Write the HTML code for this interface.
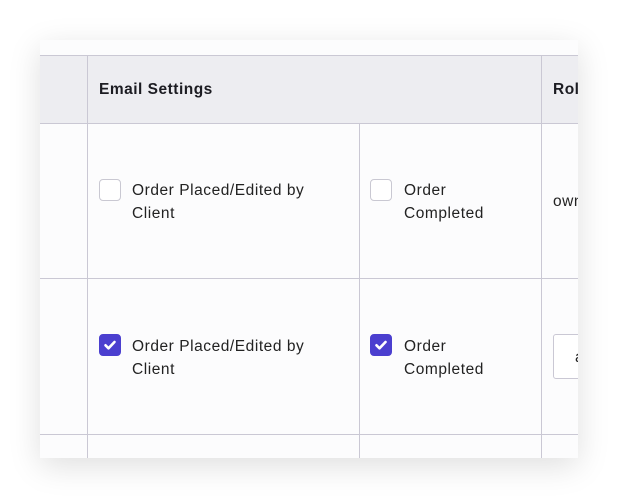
<!DOCTYPE html>
<html><head><meta charset="utf-8"><style>
html,body{margin:0;padding:0;background:#fff;width:618px;height:498px;overflow:hidden;font-family:"Liberation Sans",sans-serif;}
.card{position:absolute;left:40px;top:40px;width:538px;height:418px;background:#fcfcfd;overflow:hidden;box-shadow:0 8px 30px rgba(0,0,0,0.13);}
.abs{position:absolute}
.hl{position:absolute;left:0;width:538px;height:1px;background:#cac8d4}
.vl{position:absolute;width:1px;background:#cac8d4}
.t{position:absolute;font-size:15.5px;line-height:23px;color:#222;letter-spacing:0.55px;white-space:nowrap}
.cb{position:absolute;width:20px;height:20px;border:1px solid #c9c8d2;border-radius:4px;background:#fff}
.cb.on{background:#4b3fcf;border-color:#4b3fcf}
</style></head><body>
<div class="card">
  <div class="abs" style="left:0;top:16px;width:538px;height:67px;background:#ededf1"></div>
  <div class="hl" style="top:15px"></div>
  <div class="hl" style="top:83px"></div>
  <div class="hl" style="top:238px"></div>
  <div class="hl" style="top:394px"></div>
  <div class="vl" style="left:47px;top:16px;height:402px"></div>
  <div class="vl" style="left:319px;top:84px;height:334px"></div>
  <div class="vl" style="left:501px;top:16px;height:402px"></div>
  <div class="t" style="left:59px;top:38px;font-weight:bold;color:#1c1c22;letter-spacing:0.5px">Email Settings</div>
  <div class="t" style="left:513px;top:38px;font-weight:bold;color:#1c1c22;letter-spacing:0.5px">Role</div>

  <div class="cb" style="left:59px;top:139px"></div>
  <div class="t" style="left:92px;top:139px">Order Placed/Edited by<br>Client</div>
  <div class="cb" style="left:330px;top:139px"></div>
  <div class="t" style="left:364px;top:139px">Order<br>Completed</div>
  <div class="t" style="left:513px;top:150px">owner</div>

  <div class="cb on" style="left:59px;top:294px"><svg width="20" height="20" viewBox="0 0 20 20"><path d="M5.5 10.3l3 3 6-6.3" fill="none" stroke="#fff" stroke-width="2.6" stroke-linecap="round" stroke-linejoin="round"/></svg></div>
  <div class="t" style="left:92px;top:295px">Order Placed/Edited by<br>Client</div>
  <div class="cb on" style="left:330px;top:294px"><svg width="20" height="20" viewBox="0 0 20 20"><path d="M5.5 10.3l3 3 6-6.3" fill="none" stroke="#fff" stroke-width="2.6" stroke-linecap="round" stroke-linejoin="round"/></svg></div>
  <div class="t" style="left:364px;top:295px">Order<br>Completed</div>
  <div class="abs" style="left:513px;top:294px;width:60px;height:43px;border:1px solid #cac8d4;border-radius:3px;background:#fff"></div>
  <div class="t" style="left:535px;top:306px">a</div>
</div>
</body></html>
